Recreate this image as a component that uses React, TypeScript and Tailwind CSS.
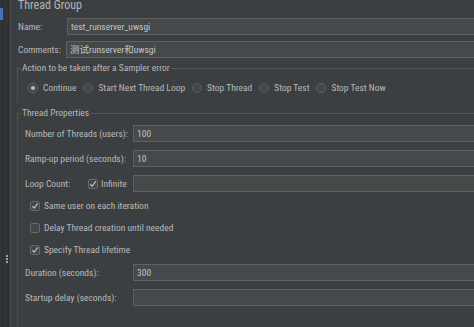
import React from 'react'

const line = 'bg-[#53575a]'

function Radio({ label, checked = false }: { label: string; checked?: boolean }) {
  return (
    <div className="flex items-center gap-[5px]">
      <span className="flex h-[10px] w-[10px] items-center justify-center rounded-full border border-[#5b5f62] bg-[#43484a]">
        {checked && <span className="h-[4px] w-[4px] rounded-full bg-[#b9bbbd]" />}
      </span>
      <span>{label}</span>
    </div>
  )
}

function Check({ checked = false }: { checked?: boolean }) {
  return (
    <span className="flex h-[10px] w-[10px] shrink-0 items-center justify-center rounded-[2px] border border-[#65696b] bg-[#43484a]">
      {checked && (
        <svg width="8" height="8" viewBox="0 0 8 8" fill="none">
          <path d="M1.3 4.2 L3.2 6.1 L6.8 1.4" stroke="#c4c6c8" strokeWidth="1.1" />
        </svg>
      )}
    </span>
  )
}

function Field({ value = '' }: { value?: string }) {
  return (
    <div className="-mr-1 flex h-[17px] flex-1 items-center border border-[#5d6163] bg-[#45494a] pl-[3px] text-[#c3c5c7]">
      {value}
    </div>
  )
}

function GroupTitle({ title }: { title: string }) {
  return (
    <div className="-ml-px flex h-[12px] items-center">
      <span className="h-[6px] w-[4px] self-end border-l border-t border-[#53575a]" />
      <span className="px-px">{title}</span>
      <span className={`h-px flex-1 ${line}`} />
    </div>
  )
}

export default function App() {
  return (
    <div className="flex h-[327px] w-[474px] overflow-hidden whitespace-nowrap bg-[#3c3f41] font-['Roboto_Condensed','Noto_Sans_CJK_SC',sans-serif] text-[9.5px] leading-[12px] text-[#b7b9bb]">
      {/* side strip */}
      <div className="flex shrink-0 border-r border-[#4a4d4f] bg-[#313335]">
        <div className="w-[3px] border-r border-[#2a2c2e] pt-[8px]">
          <div className="h-[12px] w-[3px] bg-[#4673bb]" />
        </div>
        <div className="flex w-[7px] flex-col items-center justify-end pb-[64px] pl-px">
          <span className="h-[2px] w-[2px] bg-[#a0a2a4]" />
          <span className="mt-px h-[2px] w-[2px] bg-[#a0a2a4]" />
          <span className="mt-px h-[2px] w-[2px] bg-[#a0a2a4]" />
        </div>
      </div>

      {/* main */}
      <div className="flex flex-1 flex-col pl-[7px]">
        <div className="-mt-[2px] h-[15px] text-[12px] leading-[15px] text-[#b3b5b7]">Thread Group</div>

        <div className="mt-[5px] flex items-center">
          <span className="w-[49px]">Name:</span>
          <Field value="test_runserver_uwsgi" />
        </div>
        <div className="mt-[6px] flex items-center">
          <span className="w-[48px]">Comments:</span>
          <Field value="测试runserver和uwsgi" />
        </div>

        <div className="mt-[4px]">
          <GroupTitle title="Action to be taken after a Sampler error" />
          <div className="-ml-px border-l border-[#4a4e50] pb-[8px] pl-[10px] pt-[8px]">
            <div className="flex items-center gap-[7px]">
              <Radio label="Continue" checked />
              <Radio label="Start Next Thread Loop" />
              <Radio label="Stop Thread" />
              <Radio label="Stop Test" />
              <Radio label="Stop Test Now" />
            </div>
          </div>
        </div>

        <div className="mt-[5px] flex-1">
          <GroupTitle title="Thread Properties" />
          <div className="-ml-px h-full border-l border-[#4a4e50] pl-[7px] pt-[6px]">
            <div className="flex items-center">
              <span className="w-[108px]">Number of Threads (users):</span>
              <Field value="100" />
            </div>
            <div className="mt-[8px] flex items-center">
              <span className="w-[108px]">Ramp-up period (seconds):</span>
              <Field value="10" />
            </div>
            <div className="mt-[8px] flex items-center">
              <div className="flex w-[108px] items-center">
                <span className="w-[63px]">Loop Count:</span>
                <Check checked />
                <span className="ml-[3px]">Infinite</span>
              </div>
              <Field />
            </div>
            <div className="mt-[8px] flex items-center gap-[4px] pl-[5px]">
              <Check checked />
              <span>Same user on each iteration</span>
            </div>
            <div className="mt-[10px] flex items-center gap-[4px] pl-[5px]">
              <Check />
              <span>Delay Thread creation until needed</span>
            </div>
            <div className="mt-[10px] flex items-center gap-[4px] pl-[5px]">
              <Check checked />
              <span>Specify Thread lifetime</span>
            </div>
            <div className="mt-[8px] flex items-center">
              <span className="w-[108px]">Duration (seconds):</span>
              <Field value="300" />
            </div>
            <div className="mt-[8px] flex items-center">
              <span className="w-[108px]">Startup delay (seconds):</span>
              <Field />
            </div>
          </div>
        </div>
      </div>
    </div>
  )
}
